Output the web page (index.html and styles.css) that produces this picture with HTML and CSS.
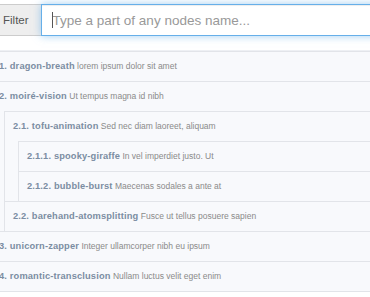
FILE: index.html
```html
<!DOCTYPE html>
<html lang="en">
<head>
  <meta charset="UTF-8" />
  <title>Node tree filter</title>
  <link rel="stylesheet" href="styles.css">
</head>
<body>

  <div class="page">
    <div class="filter-group">
      <span class="filter-label">Filter</span>
      <div class="filter-field">
        <input class="filter-input" type="text" placeholder="Type a part of any nodes name...">
      </div>
    </div>

    <ul class="tree">
      <li>
        <div class="item"><b>1. dragon-breath</b> lorem ipsum dolor sit amet</div>
      </li>
      <li>
        <div class="item"><b>2. moiré-vision</b> Ut tempus magna id nibh</div>
        <ul>
          <li>
            <div class="item"><b>2.1. tofu-animation</b> Sed nec diam laoreet, aliquam</div>
            <ul>
              <li>
                <div class="item"><b>2.1.1. spooky-giraffe</b> In vel imperdiet justo. Ut</div>
              </li>
              <li>
                <div class="item"><b>2.1.2. bubble-burst</b> Maecenas sodales a ante at</div>
              </li>
            </ul>
          </li>
          <li>
            <div class="item"><b>2.2. barehand-atomsplitting</b> Fusce ut tellus posuere sapien</div>
          </li>
        </ul>
      </li>
      <li>
        <div class="item"><b>3. unicorn-zapper</b> Integer ullamcorper nibh eu ipsum</div>
      </li>
      <li>
        <div class="item"><b>4. romantic-transclusion</b> Nullam luctus velit eget enim</div>
      </li>
    </ul>
  </div>

</body>
</html>
```

FILE: styles.css
```css
html, body {
  margin: 0;
  overflow: hidden;
  background: #fff;
}
body {
  font-family: "Liberation Sans", Arial, sans-serif;
}
.page {
  margin-left: -10px;
  margin-right: -30px;
  padding-top: 4px;
}
.filter-group {
  display: flex;
  height: 32px;
}
.filter-label {
  display: flex;
  align-items: center;
  padding: 0 12px;
  background: #eee;
  border: 1px solid #ccc;
  border-right: 0;
  color: #555;
  font-size: 11.5px;
}
.filter-field {
  flex: 1;
  display: flex;
  position: relative;
}
/* text caret shown in the focused field */
.filter-field::before {
  content: "";
  position: absolute;
  left: 11px;
  top: 8px;
  width: 1px;
  height: 16px;
  background: #555;
}
.filter-input {
  flex: 1;
  margin: 0;
  padding: 0 10px 0 11px;
  border: 1px solid #66afe9;
  outline: none;
  font-family: inherit;
  font-size: 13.5px;
  color: #555;
  box-shadow: inset 0 1px 1px rgba(0, 0, 0, .075), 0 0 8px rgba(102, 175, 233, .6);
}
.filter-input::placeholder {
  color: #999;
}
.tree, .tree ul {
  list-style: none;
  margin: 0;
  padding: 0;
}
.tree {
  margin-top: 14px;
  border-top: 1px solid #eef0f4;
}
.tree ul {
  padding-left: 13px;
}
.tree li {
  background: #f8f9fc;
  border-top: 1px solid #e2e4e9;
  border-left: 1px solid #e2e4e9;
}
.tree > li:last-child {
  border-bottom: 1px solid #e2e4e9;
}
.item {
  height: 29px;
  line-height: 29px;
  padding-left: 8px;
  white-space: nowrap;
  font-size: 8.5px;
  color: #8a8a8a;
}
.item b {
  font-size: 9.3px;
  color: #7b8da2;
  letter-spacing: 0.15px;
}
```
